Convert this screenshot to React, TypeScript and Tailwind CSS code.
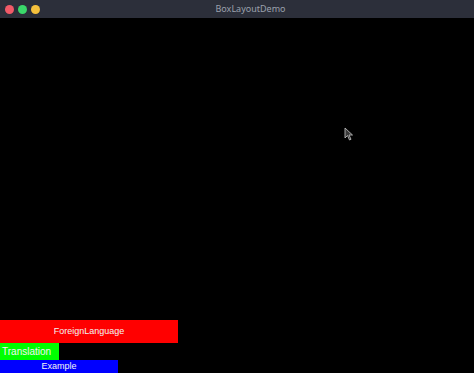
export default function App() {
  return (
    <div className="w-[474px] h-[373px] flex flex-col bg-black overflow-hidden" style={{ fontFamily: '"Liberation Sans", Arial, sans-serif' }}>
      <div className="h-[18px] shrink-0 bg-[#2c2f3a] flex items-center">
        <div className="flex gap-[4px] pl-[5px] w-[40px]">
          <span className="w-[9px] h-[9px] rounded-full bg-[#f25a68]" />
          <span className="w-[9px] h-[9px] rounded-full bg-[#3ad86a]" />
          <span className="w-[9px] h-[9px] rounded-full bg-[#f5c13c]" />
        </div>
        <div className="flex-1 text-center text-[9px] text-[#9ba1ad] pr-[13px]" style={{ fontFamily: '"Noto Sans", sans-serif' }}>BoxLayoutDemo</div>
      </div>
      <div className="flex-1 relative flex flex-col justify-end">
        <svg className="absolute left-[344px] top-[109px]" width="10" height="14" viewBox="0 0 10 14">
          <path d="M1 1 L1 11 L3.5 8.5 L5.5 13 L7 12.3 L5 8 L8.5 8 Z" fill="#3a3a3a" stroke="#b5b5b5" strokeWidth="0.9" />
        </svg>
        <div className="w-[178px] h-[23px] bg-[#ff0000] text-[#f4f4f4] text-[9px] flex items-center justify-center">ForeignLanguage</div>
        <div className="w-[59px] h-[17px] bg-[#00ff00] text-[#f4f4f4] text-[10px] flex items-center pl-[2px]">Translation</div>
        <div className="w-[118px] h-[13px] bg-[#0000ff] text-[#f4f4f4] text-[9px] flex items-start justify-center leading-[13px]">Example</div>
      </div>
    </div>
  );
}
